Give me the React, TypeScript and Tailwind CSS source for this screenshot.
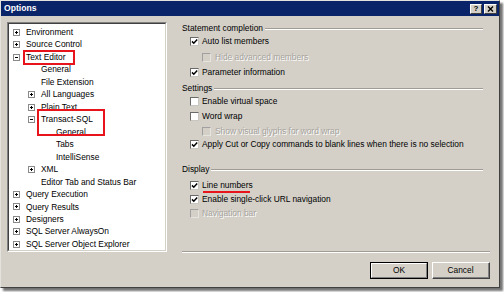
import React from 'react'

type TreeRow = { label: string; level: 0 | 1 | 2; exp?: '+' | '-' }

const TREE: TreeRow[] = [
  { label: 'Environment', level: 0, exp: '+' },
  { label: 'Source Control', level: 0, exp: '+' },
  { label: 'Text Editor', level: 0, exp: '-' },
  { label: 'General', level: 1 },
  { label: 'File Extension', level: 1 },
  { label: 'All Languages', level: 1, exp: '+' },
  { label: 'Plain Text', level: 1, exp: '+' },
  { label: 'Transact-SQL', level: 1, exp: '-' },
  { label: 'General', level: 2 },
  { label: 'Tabs', level: 2 },
  { label: 'IntelliSense', level: 2 },
  { label: 'XML', level: 1, exp: '+' },
  { label: 'Editor Tab and Status Bar', level: 1 },
  { label: 'Query Execution', level: 0, exp: '+' },
  { label: 'Query Results', level: 0, exp: '+' },
  { label: 'Designers', level: 0, exp: '+' },
  { label: 'SQL Server AlwaysOn', level: 0, exp: '+' },
  { label: 'SQL Server Object Explorer', level: 0, exp: '+' },
]

const INDENT = ['pl-[4px]', 'pl-[19px]', 'pl-[34px]']

function Expander({ sign }: { sign: '+' | '-' }) {
  return (
    <svg width="7" height="7" viewBox="0 0 7 7" className="mr-[6px] shrink-0">
      <rect x="0.5" y="0.5" width="6" height="6" fill="#fff" stroke="#8a8a8a" />
      <line x1="2" y1="3.5" x2="5" y2="3.5" stroke="#000" />
      {sign === '+' && <line x1="3.5" y1="2" x2="3.5" y2="5" stroke="#000" />}
    </svg>
  )
}

function Check({ checked, disabled }: { checked?: boolean; disabled?: boolean }) {
  return (
    <span
      className={
        disabled
          ? 'w-[9px] h-[9px] shrink-0 border border-t-[#a0a0a0] border-l-[#a0a0a0] border-r-[#e6e4de] border-b-[#e6e4de] bg-[#d4d0c8]'
          : 'w-[9px] h-[9px] shrink-0 border border-t-[#6a6a6a] border-l-[#6a6a6a] border-r-[#c8c6c0] border-b-[#c8c6c0] bg-white'
      }
    >
      {checked && (
        <svg width="7" height="7" viewBox="0 0 7 7" className="block">
          <path d="M1 3.4 L2.8 5.2 L6.2 1.6" fill="none" stroke="#000" strokeWidth="1.5" />
        </svg>
      )}
    </span>
  )
}

function Group({ title, className = '' }: { title: string; className?: string }) {
  return (
    <div className={`h-[13px] flex items-center pr-[7px] ${className}`}>
      <span>{title}</span>
      <span className="flex-1 ml-[2px] mt-[1px] h-0 border-t border-t-[#a09c94] border-b border-b-white" />
    </div>
  )
}

function Option({
  label,
  checked,
  disabled,
  sub,
  className = '',
}: {
  label: string
  checked?: boolean
  disabled?: boolean
  sub?: boolean
  className?: string
}) {
  return (
    <div className={`h-[13px] flex items-center ${sub ? 'pl-[20px] gap-[4px]' : 'pl-[8px] gap-[3px]'} ${className}`}>
      <Check checked={checked} disabled={disabled} />
      <span className={disabled ? 'text-[#a6a39c] [text-shadow:1px_1px_0_#fff]' : ''}>{label}</span>
    </div>
  )
}

export default function App() {
  return (
    <div className="relative w-[504px] h-[292px] bg-white font-['Liberation_Sans',Arial,sans-serif] text-[8.4px] text-black overflow-hidden">
      <div className="w-[500px] h-[288px] bg-[#d4d0c8] border border-t-[#e4e2dc] border-l-[#e4e2dc] border-r-[#404040] border-b-[#404040] shadow-[3px_3px_2px_rgba(0,0,0,0.55)] flex flex-col">
        {/* title bar */}
        <div className="h-[15px] bg-[#0a246a] flex items-center pl-[3px] pr-[2px]">
          <span className="text-white font-bold text-[8.6px] flex-1">Options</span>
          <div className="flex gap-[2px]">
            <span className="w-[12px] h-[10px] bg-[#d4d0c8] border border-t-white border-l-white border-r-[#404040] border-b-[#404040] flex items-center justify-center font-bold text-[8px] leading-none">
              ?
            </span>
            <span className="w-[13px] h-[10px] bg-[#d4d0c8] border border-t-white border-l-white border-r-[#404040] border-b-[#404040] flex items-center justify-center">
              <svg width="7" height="6" viewBox="0 0 7 6">
                <path d="M1 0.5 L6 5.5 M6 0.5 L1 5.5" stroke="#000" strokeWidth="1.4" />
              </svg>
            </span>
          </div>
        </div>

        <div className="flex items-start">
          {/* tree */}
          <div className="ml-[6px] mt-[6px] w-[160px] h-[230px] border border-t-[#808080] border-l-[#808080] border-r-white border-b-white">
            <div className="h-full bg-white border border-t-[#404040] border-l-[#404040] border-r-[#d4d0c8] border-b-[#d4d0c8] pt-[2px]">
              {TREE.map((r, i) => (
                <div key={i} className={`h-[12.47px] flex items-center whitespace-nowrap ${INDENT[r.level]}`}>
                  {r.exp ? <Expander sign={r.exp} /> : <span className="w-[13px] shrink-0" />}
                  <span>{r.label}</span>
                </div>
              ))}
            </div>
          </div>

          {/* options */}
          <div className="ml-[15px] mt-[6px] w-[308px] flex flex-col whitespace-nowrap">
            <Group title="Statement completion" />
            <Option label="Auto list members" checked />
            <Option label="Hide advanced members" disabled sub className="mt-[3px]" />
            <Option label="Parameter information" checked className="mt-[2px]" />

            <Group title="Settings" className="mt-[3px]" />
            <Option label="Enable virtual space" />
            <Option label="Word wrap" className="mt-[2px]" />
            <Option label="Show visual glyphs for word wrap" disabled sub className="mt-[2px]" />
            <Option label="Apply Cut or Copy commands to blank lines when there is no selection" checked />

            <Group title="Display" className="mt-[12px]" />
            <Option label="Line numbers" checked className="mt-[3px]" />
            <Option label="Enable single-click URL navigation" checked className="mt-[1px]" />
            <Option label="Navigation bar" disabled className="mt-[1px]" />

            <div className="mt-[31px] h-0 border-t border-t-[#a09c94] border-b border-b-white" />

            <div className="mt-[9px] flex justify-end gap-[4px]">
              <div className="w-[58px] h-[17px] border border-black">
                <div className="h-full border border-t-white border-l-white border-r-[#808080] border-b-[#808080] flex items-center justify-center">
                  OK
                </div>
              </div>
              <div className="w-[58px] h-[17px] border border-t-white border-l-white border-r-[#404040] border-b-[#404040]">
                <div className="h-full border-r border-b border-r-[#808080] border-b-[#808080] flex items-center justify-center">
                  Cancel
                </div>
              </div>
            </div>
          </div>
        </div>
      </div>

      {/* annotations */}
      <div className="absolute left-[23px] top-[50px] w-[52px] h-[15px] border-2 border-[#e8141c]" />
      <div className="absolute left-[37px] top-[109px] w-[68px] h-[27px] border-2 border-[#e8141c]" />
      <div className="absolute left-[203px] top-[191px] w-[47px] h-[2px] bg-[#e8141c]" />
    </div>
  )
}
